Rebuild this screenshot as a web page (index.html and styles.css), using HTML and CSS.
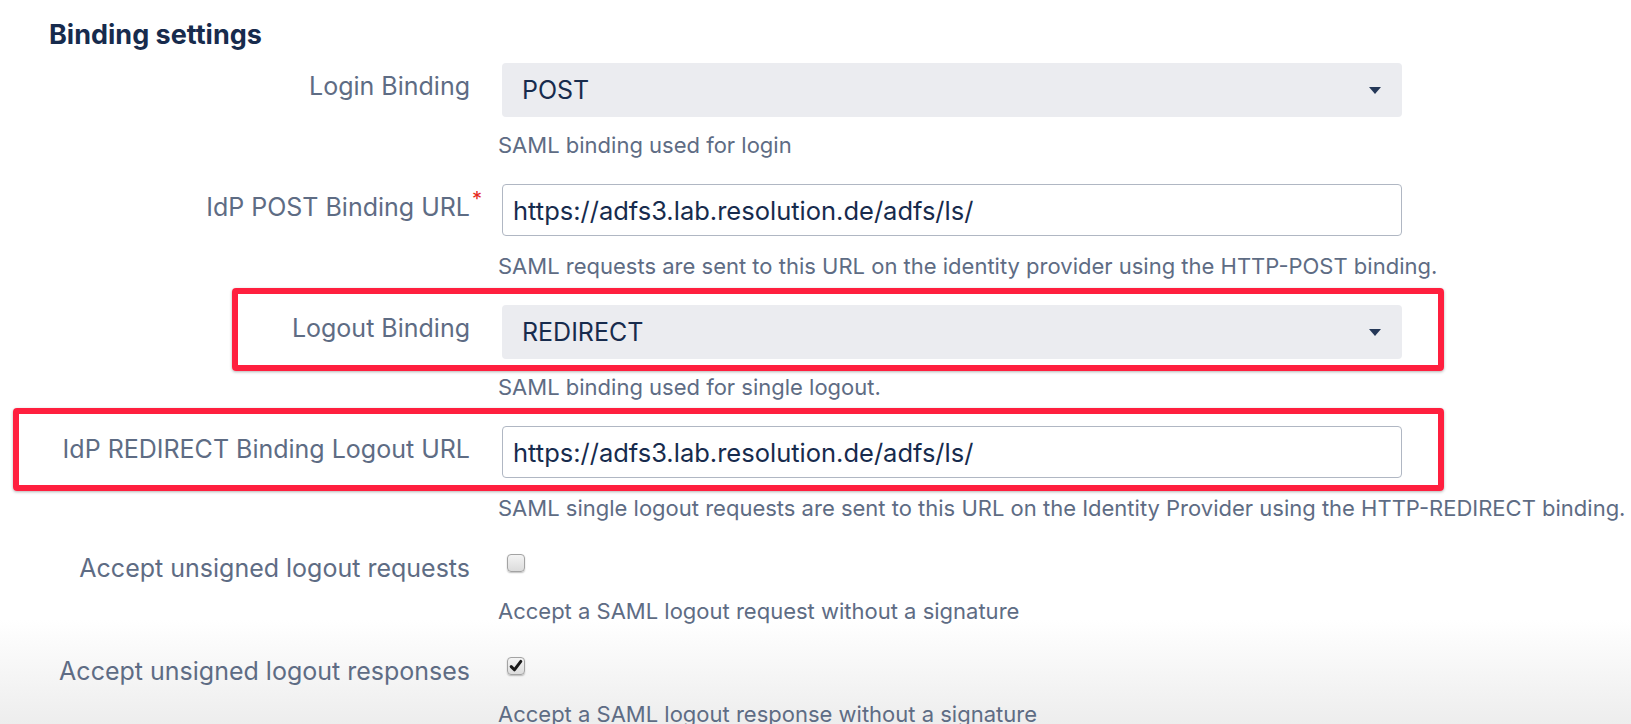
FILE: index.html
```html
<!DOCTYPE html>
<html lang="en">
<head>
<meta charset="utf-8">
<title>Binding settings</title>
<link rel="stylesheet" href="styles.css">
</head>
<body>
<div class="page">
  <h2 class="section-title">Binding settings</h2>
  <div class="form">
    <div class="field">
      <div class="field-label">Login Binding</div>
      <div class="control">
        <div class="select"><span>POST</span><span class="caret"></span></div>
      </div>
      <div class="help">SAML binding used for login</div>
    </div>
    <div class="field">
      <div class="field-label"><span class="label-text">IdP POST Binding URL<span class="required">*</span></span></div>
      <div class="control">
        <div class="input">https://adfs3.lab.resolution.de/adfs/ls/</div>
      </div>
      <div class="help">SAML requests are sent to this URL on the identity provider using the HTTP-POST binding.</div>
    </div>
    <div class="field">
      <div class="field-label">Logout Binding</div>
      <div class="control">
        <div class="select"><span>REDIRECT</span><span class="caret"></span></div>
      </div>
      <div class="help">SAML binding used for single logout.</div>
    </div>
    <div class="field">
      <div class="field-label">IdP REDIRECT Binding Logout URL</div>
      <div class="control">
        <div class="input">https://adfs3.lab.resolution.de/adfs/ls/</div>
      </div>
      <div class="help">SAML single logout requests are sent to this URL on the Identity Provider using the HTTP-REDIRECT binding.</div>
    </div>
    <div class="field field-check">
      <div class="field-label">Accept unsigned logout requests</div>
      <div class="control">
        <span class="checkbox"></span>
      </div>
      <div class="help">Accept a SAML logout request without a signature</div>
    </div>
    <div class="field field-check">
      <div class="field-label">Accept unsigned logout responses</div>
      <div class="control">
        <span class="checkbox checked"><svg viewBox="0 0 18 18" width="18" height="18"><path d="M4.2 9.6 L7.4 12.8 L13.8 4.4" fill="none" stroke="#1a1a1a" stroke-width="3" stroke-linecap="round" stroke-linejoin="round"/></svg></span>
      </div>
      <div class="help">Accept a SAML logout response without a signature</div>
    </div>
  </div>
  <div class="annotation annotation-logout-binding"></div>
  <div class="annotation annotation-logout-url"></div>
</div>
</body>
</html>
```
FILE: styles.css
```css
html, body {
  margin: 0;
  padding: 0;
}

body {
  font-family: Inter, "Noto Sans", "Liberation Sans", sans-serif;
  background: #ffffff;
}

.page {
  position: relative;
  min-height: 724px;
  background: linear-gradient(to bottom, #ffffff 0, #ffffff 620px, #ededed 724px);
  overflow: hidden;
}

.section-title {
  margin: 0;
  padding: 19px 0 0 49px;
  font-size: 27px;
  line-height: 32px;
  font-weight: 700;
  color: #172b4d;
}

.form {
  margin-top: 12px;
}

.field {
  display: grid;
  grid-template-columns: 470px 900px;
  column-gap: 32px;
}

.field-label {
  grid-column: 1;
  grid-row: 1;
  text-align: right;
  font-size: 25px;
  line-height: 30px;
  padding-top: 8px;
  color: #5e6c84;
  white-space: nowrap;
}

.field-check .field-label {
  padding-top: 6px;
}

.label-text {
  position: relative;
}

.required {
  position: absolute;
  left: calc(100% + 2px);
  top: -3px;
  font-size: 20px;
  line-height: 20px;
  color: #e5281b;
}

.control {
  grid-column: 2;
  grid-row: 1;
  height: 54px;
}

.field-check .control {
  height: 32px;
}

.select {
  height: 54px;
  box-sizing: border-box;
  background: #ebecf0;
  border-radius: 4px;
  padding: 0 21px 0 20px;
  display: flex;
  align-items: center;
  justify-content: space-between;
  font-size: 25px;
  color: #172b4d;
}

.caret {
  width: 0;
  height: 0;
  border-left: 6.5px solid transparent;
  border-right: 6.5px solid transparent;
  border-top: 7px solid #253858;
}

.input {
  height: 52px;
  box-sizing: border-box;
  border: 1px solid #b0b7c3;
  border-radius: 4px;
  padding: 0 10px;
  display: flex;
  align-items: center;
  font-size: 25.5px;
  color: #172b4d;
  background: #fff;
}

.help {
  grid-column: 2;
  grid-row: 2;
  margin: 13px 0 24px -4px;
  font-size: 22px;
  line-height: 30px;
  color: #5e6c84;
  white-space: nowrap;
}

.checkbox {
  display: block;
  box-sizing: border-box;
  width: 18px;
  height: 18px;
  margin: 7px 0 0 5px;
  border: 1px solid #a3a3a3;
  border-radius: 4px;
  background: linear-gradient(to bottom, #f4f4f4, #dcdcdc);
  box-shadow: 0 1px 1.5px rgba(0, 0, 0, 0.25);
  position: relative;
}

.checkbox svg {
  position: absolute;
  left: -1px;
  top: -1px;
}

.annotation {
  position: absolute;
  box-sizing: border-box;
  border: 6px solid #ff1f3e;
  border-radius: 4px;
  box-shadow: 0 1px 3px rgba(0, 0, 0, 0.3);
  pointer-events: none;
}

.annotation-logout-binding {
  left: 232px;
  top: 288px;
  width: 1212px;
  height: 83px;
}

.annotation-logout-url {
  left: 13px;
  top: 408px;
  width: 1431px;
  height: 83px;
}
```
